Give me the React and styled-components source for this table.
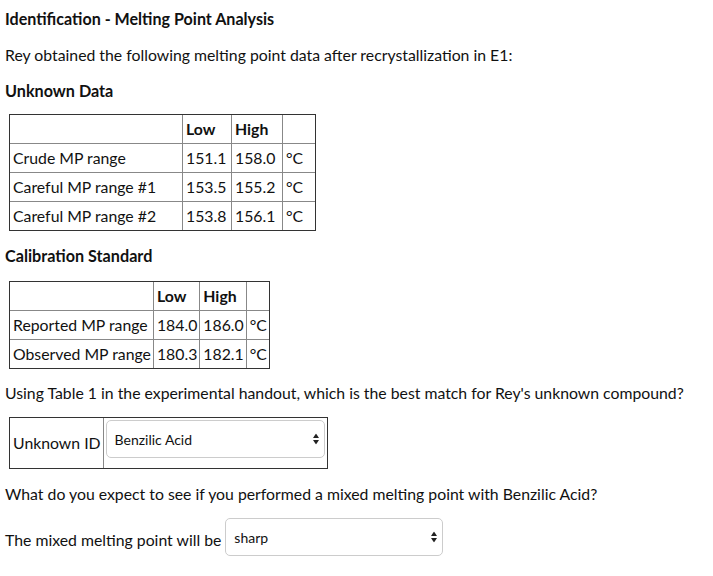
import React from "react";
import styled, { createGlobalStyle } from "styled-components";

const FS = "15.8px";

const GlobalStyle = createGlobalStyle`
  html, body { margin: 0; padding: 0; background: #fff; }
  body { font-family: Lato, "Open Sans", sans-serif; color: #111; font-size: ${FS}; line-height: 18px; }
`;

const Page = styled.div`
  padding: 10px 5px;
`;

const Title = styled.h1`
  margin: 0;
  font-size: 16.1px;
  line-height: 18px;
  font-weight: 700;
`;

const Para = styled.p`
  margin: ${(p) => p.$mt || 18}px 0 0;
  font-size: ${FS};
  line-height: 18px;
`;

const SubHead = styled.h2`
  margin: ${(p) => p.$mt || 18}px 0 0;
  font-size: 16.2px;
  line-height: 18px;
  font-weight: 700;
`;

const Table = styled.table`
  margin: ${(p) => p.$mt || 13}px 0 0 4px;
  border-collapse: separate;
  border-spacing: 0;
  border: 1px solid #333;
  font-size: ${FS};
  line-height: 18px;
`;

const Cell = styled.td`
  box-sizing: border-box;
  padding: 5px 2px 5px 3px;
  border-left: 1px solid #888;
  border-top: 1px solid #888;
  font-weight: ${(p) => (p.$head ? 700 : 400)};
  text-align: left;
  white-space: nowrap;
  ${(p) => (p.$w ? `width: ${p.$w}px;` : "")}
  tr:first-child > & { border-top: none; }
  &:first-child { border-left: none; }
`;

const SelectCell = styled.td`
  padding: ${(p) => (p.$select ? "2px 2px 10px 2px" : "0 2px 0 3px")};
  border-left: ${(p) => (p.$select ? "1px solid #888" : "none")};
  vertical-align: middle;
  white-space: nowrap;
`;

const SelectWrap = styled.span`
  position: relative;
  display: inline-block;
  vertical-align: baseline;
  width: ${(p) => p.$w}px;
`;

const Select = styled.select`
  appearance: none;
  -webkit-appearance: none;
  box-sizing: border-box;
  width: 100%;
  height: 38px;
  margin: 0;
  padding: 0 20px 0 8px;
  border: 1px solid #ccc;
  border-radius: 5px;
  background: #fff;
  font-family: Lato, "Open Sans", sans-serif;
  font-size: 14px;
  color: #111;
  display: block;
`;

const Arrow = styled.svg`
  position: absolute;
  right: 6px;
  top: 50%;
  transform: translateY(-50%);
  pointer-events: none;
`;

const InlineRow = styled.div`
  margin-top: 15px;
  display: flex;
  align-items: center;
  gap: 4px;
  font-size: ${FS};
`;

const LabelText = styled.span`
  position: relative;
  top: 3px;
`;

function Dropdown({ value, width }) {
  return (
    <SelectWrap $w={width}>
      <Select defaultValue={value}>
        <option>{value}</option>
      </Select>
      <Arrow width="6" height="11" viewBox="0 0 6 11">
        <polygon points="0,4.5 3,0 6,4.5" fill="#222" />
        <polygon points="0,6.5 6,6.5 3,11" fill="#222" />
      </Arrow>
    </SelectWrap>
  );
}

const unknown = [
  ["Crude MP range", "151.1", "158.0"],
  ["Careful MP range #1", "153.5", "155.2"],
  ["Careful MP range #2", "153.8", "156.1"],
];

const calib = [
  ["Reported MP range", "184.0", "186.0"],
  ["Observed MP range", "180.3", "182.1"],
];

function DataTable({ rows, widths, mt }) {
  return (
    <Table $mt={mt}>
      <tbody>
        <tr>
          <Cell $w={widths[0]}></Cell>
          <Cell $head $w={widths[1]}>Low</Cell>
          <Cell $head $w={widths[2]}>High</Cell>
          <Cell $w={widths[3]}></Cell>
        </tr>
        {rows.map((r) => (
          <tr key={r[0]}>
            <Cell>{r[0]}</Cell>
            <Cell>{r[1]}</Cell>
            <Cell>{r[2]}</Cell>
            <Cell>°C</Cell>
          </tr>
        ))}
      </tbody>
    </Table>
  );
}

export default function App() {
  return (
    <Page>
      <GlobalStyle />
      <Title>Identification - Melting Point Analysis</Title>
      <Para>Rey obtained the following melting point data after recrystallization in E1:</Para>
      <SubHead>Unknown Data</SubHead>
      <DataTable rows={unknown} widths={[172, 49, 51, 33]} mt={14} />
      <SubHead $mt={16}>Calibration Standard</SubHead>
      <DataTable rows={calib} widths={[0, 0, 0, 0]} mt={16} />
      <Para $mt={15}>
        Using Table 1 in the experimental handout, which is the best match for Rey's unknown compound?
      </Para>
      <Table $mt={15}>
        <tbody>
          <tr>
            <SelectCell>Unknown ID</SelectCell>
            <SelectCell $select>
              <Dropdown value="Benzilic Acid" width={219} />
            </SelectCell>
          </tr>
        </tbody>
      </Table>
      <Para $mt={16}>What do you expect to see if you performed a mixed melting point with Benzilic Acid?</Para>
      <InlineRow>
        <LabelText>The mixed melting point will be</LabelText>
        <Dropdown value="sharp" width={218} />
      </InlineRow>
    </Page>
  );
}
